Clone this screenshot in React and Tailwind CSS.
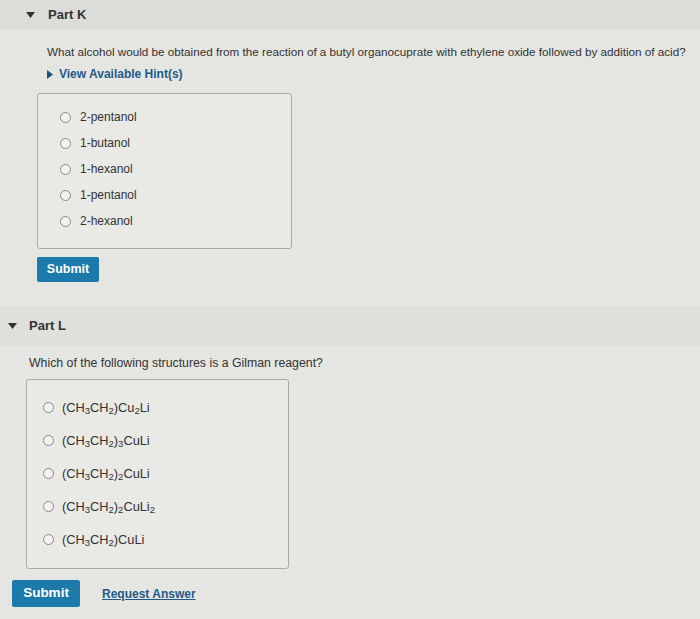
import React from 'react';

const PART_K_OPTIONS = ['2-pentanol', '1-butanol', '1-hexanol', '1-pentanol', '2-hexanol'];

const Sub = ({ children }) => (
  <sub className="text-[9.5px] align-baseline relative top-[2px]">{children}</sub>
);

const PART_L_OPTIONS = [
  <>(CH<Sub>3</Sub>CH<Sub>2</Sub>)Cu<Sub>2</Sub>Li</>,
  <>(CH<Sub>3</Sub>CH<Sub>2</Sub>)<Sub>3</Sub>CuLi</>,
  <>(CH<Sub>3</Sub>CH<Sub>2</Sub>)<Sub>2</Sub>CuLi</>,
  <>(CH<Sub>3</Sub>CH<Sub>2</Sub>)<Sub>2</Sub>CuLi<Sub>2</Sub></>,
  <>(CH<Sub>3</Sub>CH<Sub>2</Sub>)CuLi</>,
];

function Radio() {
  return <span className="w-[11px] h-[11px] rounded-full border-[1.5px] border-[#8a8a8a] bg-[#f2f2f0] shrink-0" />;
}

function Caret() {
  return (
    <svg width="9" height="6" viewBox="0 0 9 6" className="shrink-0">
      <path d="M0 0 L9 0 L4.5 6 Z" fill="#333" />
    </svg>
  );
}

export default function App() {
  return (
    <div
      className="w-[700px] h-[619px] overflow-hidden bg-[#e5e5e2] text-[#2e2e2e]"
      style={{ fontFamily: '"Liberation Sans", Arial, sans-serif' }}
    >
      {/* Part K */}
      <div className="h-[30px] bg-[#dcdcd9] flex items-center pl-[26px] gap-[13px]">
        <Caret />
        <span className="text-[13px] font-bold text-[#333]">Part K</span>
      </div>
      <div className="pl-[47px] pt-[14px]">
        <p className="text-[11.7px] leading-[15px] text-[#333] whitespace-nowrap">
          What alcohol would be obtained from the reaction of a butyl organocuprate with ethylene oxide followed by addition of acid?
        </p>
        <div className="flex items-center gap-[6px] mt-[6px]">
          <svg width="6" height="9" viewBox="0 0 6 9">
            <path d="M0 0 L6 4.5 L0 9 Z" fill="#1d4f7a" />
          </svg>
          <span className="text-[12px] font-bold text-[#1f5a8a]">View Available Hint(s)</span>
        </div>
      </div>
      <div className="ml-[37px] mt-[10px] w-[255px] h-[156px] border border-[#a9a9a7] rounded-[3px] bg-[#e9e9e6] pl-[22px] pt-[16px] flex flex-col gap-[12px]">
        {PART_K_OPTIONS.map((o) => (
          <div key={o} className="flex items-center gap-[9px] h-[14px]">
            <Radio />
            <span className="text-[12px] text-[#333]">{o}</span>
          </div>
        ))}
      </div>
      <button className="ml-[37px] mt-[8px] w-[62px] h-[25px] bg-[#1b7aa9] rounded-[2px] text-white text-[12.5px] font-bold">
        Submit
      </button>

      {/* Part L */}
      <div className="mt-[24px] h-[40px] bg-[#dfdfdc] flex items-center pl-[8px] gap-[12px]">
        <Caret />
        <span className="text-[13px] font-bold text-[#333]">Part L</span>
      </div>
      <p className="pl-[29px] mt-[10px] text-[12.3px] leading-[15px] text-[#333]">
        Which of the following structures is a Gilman reagent?
      </p>
      <div className="ml-[26px] mt-[8px] w-[263px] h-[190px] border border-[#a9a9a7] rounded-[3px] bg-[#e9e9e6] pl-[16px] pt-[20px] flex flex-col gap-[18px]">
        {PART_L_OPTIONS.map((o, i) => (
          <div key={i} className="flex items-center gap-[8px] h-[15px]">
            <Radio />
            <span className="text-[12.8px] text-[#333]">{o}</span>
          </div>
        ))}
      </div>
      <div className="flex items-center ml-[12px] mt-[11px] gap-[22px]">
        <button className="w-[68px] h-[27px] bg-[#1b7aa9] rounded-[2px] text-white text-[13.5px] font-bold">
          Submit
        </button>
        <span className="text-[12px] font-bold text-[#1f5a8a] underline">Request Answer</span>
      </div>
    </div>
  );
}
